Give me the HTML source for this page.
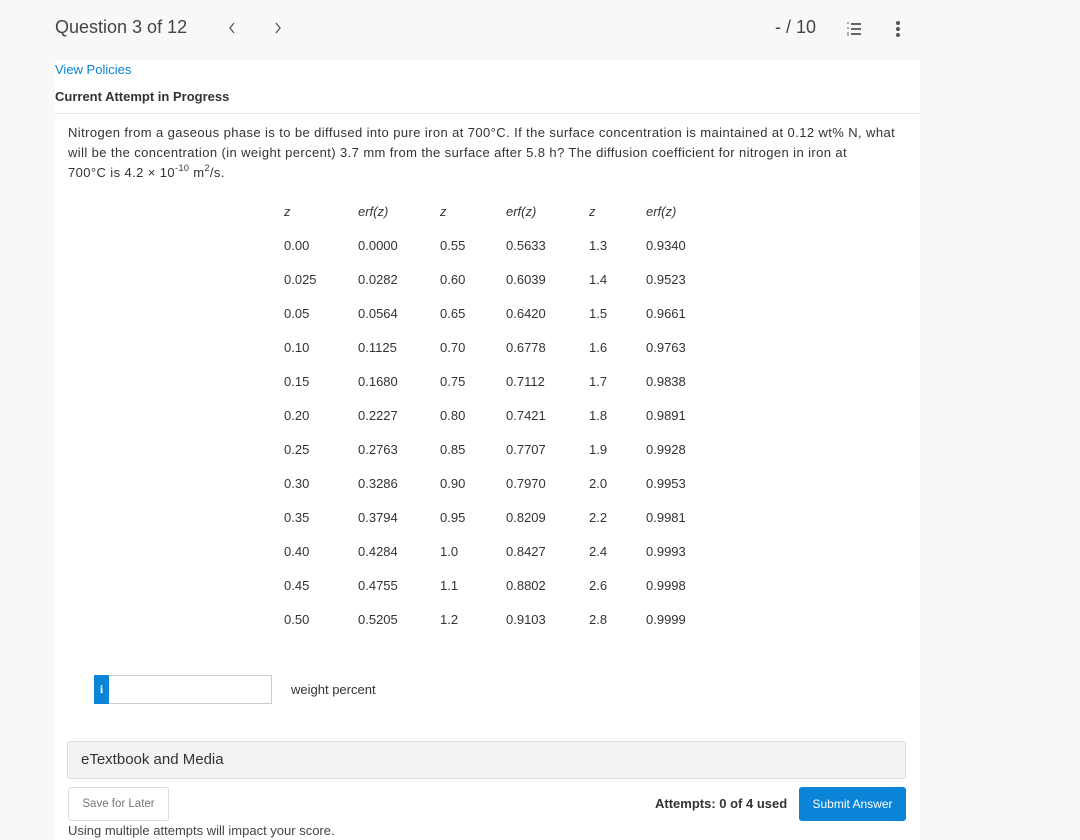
<!DOCTYPE html>
<html><head><style>
body{margin:0;width:1080px;height:840px;background:#f8f8f8;font-family:"Liberation Sans",sans-serif;color:#333;position:relative;overflow:hidden}
.a{position:absolute;white-space:nowrap}
.panel{position:absolute;left:55px;top:60px;width:865px;height:780px;background:#fff}
td{padding:0;height:34px;font-size:13px;color:#333}
.s{font-size:9px;position:relative;top:-6px;line-height:0}
</style></head><body>
<div class="a" style="left:55px;top:17px;font-size:18px;color:#444">Question 3 of 12</div>
<svg class="a" style="left:228px;top:22px" width="8" height="12"><path d="M6 1 L2 6 L6 11" stroke="#555" stroke-width="1.3" fill="none"/></svg>
<svg class="a" style="left:274px;top:22px" width="8" height="12"><path d="M2 1 L6 6 L2 11" stroke="#555" stroke-width="1.3" fill="none"/></svg>
<div class="a" style="left:775px;top:17px;font-size:18px;color:#444">- / 10</div>
<svg class="a" style="left:846px;top:21px" width="16" height="16"><g stroke="#666" stroke-width="2"><line x1="5" y1="3" x2="15" y2="3"/><line x1="5" y1="8" x2="15" y2="8"/><line x1="5" y1="13" x2="15" y2="13"/></g><g stroke="#666" stroke-width="1"><line x1="1" y1="2" x2="3" y2="2"/><line x1="1" y1="7" x2="3" y2="7"/><line x1="1" y1="12" x2="3" y2="12"/><line x1="1" y1="14" x2="3" y2="14"/></g></svg>
<svg class="a" style="left:894px;top:20px" width="8" height="18"><circle cx="4" cy="3" r="2" fill="#555"/><circle cx="4" cy="9" r="2" fill="#555"/><circle cx="4" cy="15" r="2" fill="#555"/></svg>
<div class="panel"></div>
<div class="a" style="left:55px;top:62px;font-size:13px;color:#0a84d6">View Policies</div>
<div class="a" style="left:55px;top:89px;font-size:13px;font-weight:bold;color:#333">Current Attempt in Progress</div>
<div class="a" style="left:55px;top:113px;width:865px;height:1px;background:#e6e6e6"></div>
<div class="a" style="left:68px;top:123px;font-size:13px;letter-spacing:0.4px;line-height:20px;color:#333">Nitrogen from a gaseous phase is to be diffused into pure iron at 700°C. If the surface concentration is maintained at 0.12 wt% N, what<br>will be the concentration (in weight percent) 3.7 mm from the surface after 5.8 h? The diffusion coefficient for nitrogen in iron at<br>700°C is 4.2 × 10<span class="s">-10</span> m<span class="s">2</span>/s.</div>
<table class="a" style="left:284px;top:194px;border-collapse:collapse">
<colgroup><col style="width:74px"><col style="width:82px"><col style="width:66px"><col style="width:83px"><col style="width:57px"><col style="width:60px"></colgroup>
<tr><td><i>z</i></td><td><i>erf(z)</i></td><td><i>z</i></td><td><i>erf(z)</i></td><td><i>z</i></td><td><i>erf(z)</i></td></tr>
<tr><td>0.00</td><td>0.0000</td><td>0.55</td><td>0.5633</td><td>1.3</td><td>0.9340</td></tr>
<tr><td>0.025</td><td>0.0282</td><td>0.60</td><td>0.6039</td><td>1.4</td><td>0.9523</td></tr>
<tr><td>0.05</td><td>0.0564</td><td>0.65</td><td>0.6420</td><td>1.5</td><td>0.9661</td></tr>
<tr><td>0.10</td><td>0.1125</td><td>0.70</td><td>0.6778</td><td>1.6</td><td>0.9763</td></tr>
<tr><td>0.15</td><td>0.1680</td><td>0.75</td><td>0.7112</td><td>1.7</td><td>0.9838</td></tr>
<tr><td>0.20</td><td>0.2227</td><td>0.80</td><td>0.7421</td><td>1.8</td><td>0.9891</td></tr>
<tr><td>0.25</td><td>0.2763</td><td>0.85</td><td>0.7707</td><td>1.9</td><td>0.9928</td></tr>
<tr><td>0.30</td><td>0.3286</td><td>0.90</td><td>0.7970</td><td>2.0</td><td>0.9953</td></tr>
<tr><td>0.35</td><td>0.3794</td><td>0.95</td><td>0.8209</td><td>2.2</td><td>0.9981</td></tr>
<tr><td>0.40</td><td>0.4284</td><td>1.0</td><td>0.8427</td><td>2.4</td><td>0.9993</td></tr>
<tr><td>0.45</td><td>0.4755</td><td>1.1</td><td>0.8802</td><td>2.6</td><td>0.9998</td></tr>
<tr><td>0.50</td><td>0.5205</td><td>1.2</td><td>0.9103</td><td>2.8</td><td>0.9999</td></tr>
</table>
<div class="a" style="left:94px;top:675px;width:15px;height:29px;background:#0a84d6;color:#fff;font-weight:bold;font-size:12px;text-align:center;line-height:29px;font-family:'Liberation Serif',serif">i</div>
<div class="a" style="left:109px;top:675px;width:162px;height:27px;border:1px solid #ccc;border-left:none"></div>
<div class="a" style="left:291px;top:682px;font-size:13px;color:#333">weight percent</div>
<div class="a" style="left:67px;top:741px;width:837px;height:36px;background:#f3f3f3;border:1px solid #ddd;border-radius:3px"></div>
<div class="a" style="left:81px;top:751px;font-size:15px;color:#333">eTextbook and Media</div>
<div class="a" style="left:68px;top:787px;width:99px;height:32px;border:1px solid #ddd;border-radius:3px;background:#fff;font-size:11.5px;color:#777;text-align:center;line-height:32px">Save for Later</div>
<div class="a" style="left:655px;top:796px;font-size:13px;font-weight:bold;color:#333">Attempts: 0 of 4 used</div>
<div class="a" style="left:799px;top:787px;width:107px;height:34px;background:#0a84d6;border-radius:3px;color:#fff;font-size:12px;text-align:center;line-height:34px">Submit Answer</div>
<div class="a" style="left:68px;top:823px;font-size:13px;color:#444">Using multiple attempts will impact your score.</div>
</body></html>
